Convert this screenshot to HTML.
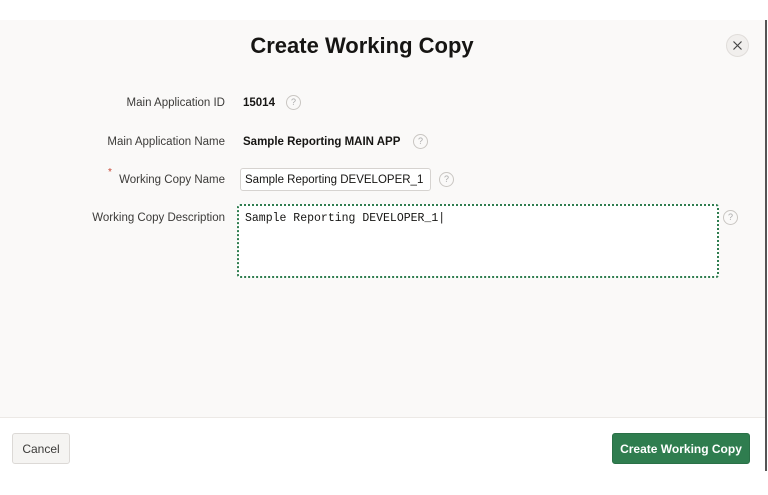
<!DOCTYPE html>
<html><head><style>
*{box-sizing:border-box;margin:0;padding:0}
body{width:768px;height:495px;background:#fff;font-family:"Liberation Sans",sans-serif;position:relative;overflow:hidden}
.dlg{position:absolute;left:0;top:20px;width:766px;height:398px;background:#faf9f8}
.ft{position:absolute;left:0;top:417px;width:766px;height:54px;background:#fff;border-top:1px solid #ece9e6}
.edge{position:absolute;left:765px;top:20px;width:2px;height:451px;background:#555}
.t{position:absolute;left:0;width:724px;text-align:center;top:33px;font-size:22px;font-weight:bold;color:#161513}
.x{position:absolute;left:726px;top:34px;width:23px;height:23px;border-radius:50%;background:#f1efed;border:1px solid #e0ddda}
.l{position:absolute;right:543px;font-size:11.5px;color:#3c3b39}
.v{position:absolute;left:243px;font-size:11.5px;font-weight:bold;color:#161513}
.h{position:absolute;width:15px;height:15px;border-radius:50%;border:1px solid #c9c6c2;color:#aaa;font-size:9px;text-align:center;line-height:13px}
.in{position:absolute;left:240px;top:168px;width:191px;height:23px;background:#fff;border:1px solid #d6d3d0;border-radius:3px;font-size:11.5px;padding:5px 4px;color:#161513}
.ta{position:absolute;left:237px;top:204px;width:482px;height:74px;background:#fff;border:2px dotted #2f7d4f;border-radius:3px;font-family:"Liberation Mono",monospace;font-size:11.5px;padding:6px 6px;color:#161513}
.b{position:absolute;top:433px;height:31px;border-radius:3px;font-size:12px;line-height:30px;text-align:center}
</style></head><body>
<div class="dlg"></div>
<div class="ft"></div>
<div class="edge"></div>
<div class="t">Create Working Copy</div>
<div class="x"><svg width="21" height="21" viewBox="0 0 21 21"><path d="M6.5 6.5L14.5 14.5M14.5 6.5L6.5 14.5" stroke="#444" stroke-width="1.2"/></svg></div>
<div class="l" style="top:97px">Main Application ID</div>
<div class="v" style="top:97px">15014</div>
<div class="h" style="left:286px;top:95px">?</div>
<div class="l" style="top:136px">Main Application Name</div>
<div class="v" style="top:136px">Sample Reporting MAIN APP</div>
<div class="h" style="left:413px;top:134px">?</div>
<div style="position:absolute;left:108px;top:167px;color:#c74634;font-size:10px">*</div>
<div class="l" style="top:174px">Working Copy Name</div>
<div class="in">Sample Reporting DEVELOPER_1</div>
<div class="h" style="left:439px;top:172px">?</div>
<div class="l" style="top:212px">Working Copy Description</div>
<div class="ta">Sample Reporting DEVELOPER_1|</div>
<div class="h" style="left:723px;top:210px">?</div>
<div class="b" style="left:12px;width:58px;background:#f5f4f2;border:1px solid #dcd9d6;color:#3c3b39">Cancel</div>
<div class="b" style="left:612px;width:138px;background:#2f7d4f;color:#fff;font-weight:bold;border:1px solid #2a7047">Create Working Copy</div>
</body></html>
